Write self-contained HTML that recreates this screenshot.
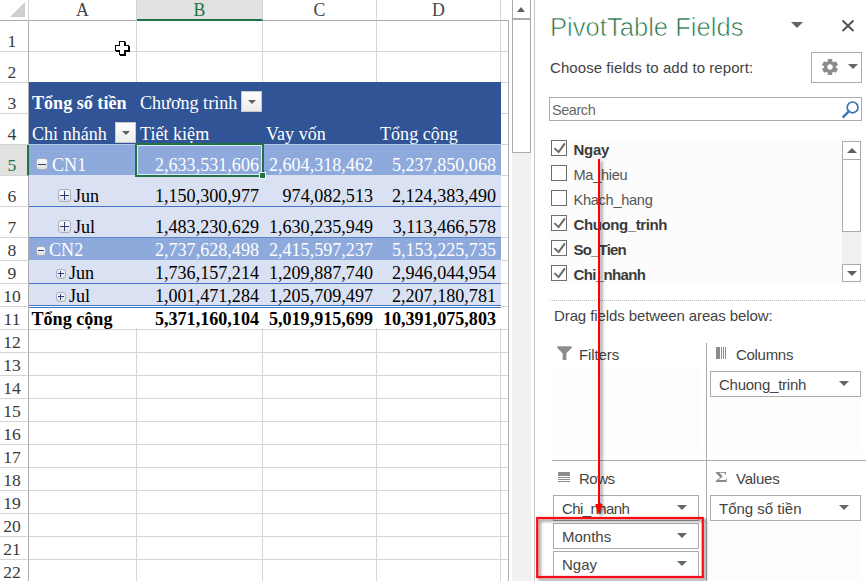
<!DOCTYPE html>
<html><head><meta charset="utf-8"><title>PivotTable</title>
<style>
html,body{margin:0;padding:0;}
body{width:866px;height:581px;overflow:hidden;position:relative;background:#fff;font-family:"Liberation Serif",serif;}
div,span{position:absolute;box-sizing:border-box;white-space:nowrap;}
#grid{left:0;top:0;width:509px;height:581px;overflow:hidden;background:#fff;}
.ch{top:0;height:21px;background:#fff;color:#444;font-size:17.8px;line-height:21px;text-align:center;border-right:1px solid #d4d4d4;border-bottom:1px solid #ababab;}
.rh{left:0;width:29px;background:#fff;color:#3a3a3a;font-size:17.6px;text-align:center;border-bottom:1px solid #d4d4d4;border-right:1px solid #ababab;}
.rh span{left:0;width:24px;bottom:-1px;line-height:21px;text-align:center;}
.hl{background:#e1e1e1 !important;}
.vl{top:20px;width:1px;height:561px;background:#d6d6d6;}
.gl{left:29px;width:479px;height:1px;background:#d6d6d6;}
.c{font-size:18.1px;line-height:21px;height:21px;}
.r{text-align:right;}
.w{color:#fff;}
.k{color:#000;}
.b{font-weight:bold;}
.sans{font-family:"Liberation Sans",sans-serif;}
</style></head><body>
<div id="grid">

<div class="gl" style="top:51px"></div>
<div class="gl" style="top:82px"></div>
<div class="gl" style="top:113px"></div>
<div class="gl" style="top:144px"></div>
<div class="gl" style="top:175px"></div>
<div class="gl" style="top:206px"></div>
<div class="gl" style="top:237px"></div>
<div class="gl" style="top:260px"></div>
<div class="gl" style="top:283px"></div>
<div class="gl" style="top:306px"></div>
<div class="gl" style="top:329px"></div>
<div class="gl" style="top:352px"></div>
<div class="gl" style="top:375px"></div>
<div class="gl" style="top:398px"></div>
<div class="gl" style="top:421px"></div>
<div class="gl" style="top:444px"></div>
<div class="gl" style="top:467px"></div>
<div class="gl" style="top:490px"></div>
<div class="gl" style="top:513px"></div>
<div class="gl" style="top:536px"></div>
<div class="gl" style="top:559px"></div>
<div class="gl" style="top:582px"></div>
<div class="gl" style="top:605px"></div>
<div class="vl" style="left:136px"></div>
<div class="vl" style="left:262px"></div>
<div class="vl" style="left:376px"></div>
<div class="vl" style="left:500px"></div>
<div style="left:29px;top:82px;width:472px;height:62px;background:#305496"></div>
<div style="left:29px;top:144px;width:472px;height:31px;background:#8ea9db"></div>
<div style="left:29px;top:144px;width:472px;height:1px;background:#b4c6e7"></div>
<div style="left:29px;top:175px;width:472px;height:62px;background:#d9e1f2"></div>
<div style="left:29px;top:206px;width:472px;height:1px;background:#4472c4"></div>
<div style="left:29px;top:237px;width:472px;height:23px;background:#8ea9db"></div>
<div style="left:29px;top:237px;width:472px;height:1px;background:#5b84cc"></div>
<div style="left:29px;top:260px;width:472px;height:46px;background:#d9e1f2"></div>
<div style="left:29px;top:283px;width:472px;height:1px;background:#4472c4"></div>
<div style="left:29px;top:305px;width:472px;height:3px;border-top:1px solid #4472c4;border-bottom:1px solid #4472c4;background:#fff"></div>
<div style="left:29px;top:308px;width:472px;height:20px;background:#fff"></div>
<div class="ch" style="left:0;width:29px;"></div>
<div style="left:10px;top:2px;width:0;height:0;border-left:15px solid transparent;border-bottom:15px solid #cfcfcf;"></div>
<div class="ch" style="left:29px;width:108px;">A</div>
<div class="ch hl" style="left:137px;width:126px;color:#217346;border-bottom:2px solid #217346;">B</div>
<div class="ch" style="left:263px;width:114px;">C</div>
<div class="ch" style="left:377px;width:124px;">D</div>
<div class="ch" style="left:501px;width:8px;border-right:none"></div>
<div style="left:508px;top:20px;width:1px;height:561px;background:#ababab"></div>
<div class="rh" style="top:21px;height:31px;"><span>1</span></div>
<div class="rh" style="top:52px;height:31px;"><span>2</span></div>
<div class="rh" style="top:83px;height:31px;"><span>3</span></div>
<div class="rh" style="top:114px;height:31px;"><span>4</span></div>
<div class="rh hl" style="top:145px;height:31px;color:#217346;border-right:2px solid #217346;"><span>5</span></div>
<div class="rh" style="top:176px;height:31px;"><span>6</span></div>
<div class="rh" style="top:207px;height:31px;"><span>7</span></div>
<div class="rh" style="top:238px;height:23px;"><span>8</span></div>
<div class="rh" style="top:261px;height:23px;"><span>9</span></div>
<div class="rh" style="top:284px;height:23px;"><span>10</span></div>
<div class="rh" style="top:307px;height:23px;"><span>11</span></div>
<div class="rh" style="top:330px;height:23px;"><span>12</span></div>
<div class="rh" style="top:353px;height:23px;"><span>13</span></div>
<div class="rh" style="top:376px;height:23px;"><span>14</span></div>
<div class="rh" style="top:399px;height:23px;"><span>15</span></div>
<div class="rh" style="top:422px;height:23px;"><span>16</span></div>
<div class="rh" style="top:445px;height:23px;"><span>17</span></div>
<div class="rh" style="top:468px;height:23px;"><span>18</span></div>
<div class="rh" style="top:491px;height:23px;"><span>19</span></div>
<div class="rh" style="top:514px;height:23px;"><span>20</span></div>
<div class="rh" style="top:537px;height:23px;"><span>21</span></div>
<div class="rh" style="top:560px;height:23px;"><span>22</span></div>
<div class="rh" style="top:583px;height:23px;"><span>23</span></div>
<div class="c w b" style="left:32px;top:93px;">Tổng số tiền</div>
<div class="c w" style="left:140px;top:93px;">Chương trình</div>
<div class="c w" style="left:32px;top:124px;">Chi nhánh</div>
<div class="c w" style="left:140px;top:124px;">Tiết kiệm</div>
<div class="c w" style="left:266px;top:124px;">Vay vốn</div>
<div class="c w" style="left:380px;top:124px;">Tổng cộng</div>
<div style="left:241px;top:91px;width:21px;height:21px;background:linear-gradient(#fff,#ececec);border:1px solid #c8c8c8;"><div style="left:6px;top:8px;width:0;height:0;border-left:4px solid transparent;border-right:4px solid transparent;border-top:4px solid #606060;"></div></div>
<div style="left:115px;top:122px;width:21px;height:21px;background:linear-gradient(#fff,#ececec);border:1px solid #c8c8c8;"><div style="left:6px;top:8px;width:0;height:0;border-left:4px solid transparent;border-right:4px solid transparent;border-top:4px solid #606060;"></div></div>
<div class="c w" style="left:52px;top:155px;">CN1</div>
<div style="left:36.3px;top:158.3px;width:12px;height:12px;background:linear-gradient(#f4f4f4 30%,#dedede);border:1px solid #a9afbf;border-radius:3px;"><div style="left:1px;right:1px;top:4.40px;height:1.2px;background:#2f3a78"></div></div>
<div class="c r w" style="left:136px;width:123px;top:155px;">2,633,531,606</div>
<div class="c r w" style="left:262px;width:111px;top:155px;">2,604,318,462</div>
<div class="c r w" style="left:376px;width:120px;top:155px;">5,237,850,068</div>
<div class="c k" style="left:74px;top:186px;">Jun</div>
<div style="left:58px;top:189px;width:13px;height:13px;background:linear-gradient(#f4f4f4 30%,#dedede);border:1px solid #a9afbf;border-radius:3px;"><div style="left:1px;right:1px;top:4.90px;height:1.2px;background:#2f3a78"></div><div style="top:1px;bottom:1px;left:4.90px;width:1.2px;background:#2f3a78"></div></div>
<div class="c r k" style="left:136px;width:123px;top:186px;">1,150,300,977</div>
<div class="c r k" style="left:262px;width:111px;top:186px;">974,082,513</div>
<div class="c r k" style="left:376px;width:120px;top:186px;">2,124,383,490</div>
<div class="c k" style="left:74px;top:217px;">Jul</div>
<div style="left:58px;top:220px;width:13px;height:13px;background:linear-gradient(#f4f4f4 30%,#dedede);border:1px solid #a9afbf;border-radius:3px;"><div style="left:1px;right:1px;top:4.90px;height:1.2px;background:#2f3a78"></div><div style="top:1px;bottom:1px;left:4.90px;width:1.2px;background:#2f3a78"></div></div>
<div class="c r k" style="left:136px;width:123px;top:217px;">1,483,230,629</div>
<div class="c r k" style="left:262px;width:111px;top:217px;">1,630,235,949</div>
<div class="c r k" style="left:376px;width:120px;top:217px;">3,113,466,578</div>
<div class="c w" style="left:49px;top:240px;">CN2</div>
<div style="left:35.5px;top:245.5px;width:10px;height:10px;background:linear-gradient(#f4f4f4 30%,#dedede);border:1px solid #a9afbf;border-radius:3px;"><div style="left:1px;right:1px;top:3.40px;height:1.2px;background:#2f3a78"></div></div>
<div class="c r w" style="left:136px;width:123px;top:240px;">2,737,628,498</div>
<div class="c r w" style="left:262px;width:111px;top:240px;">2,415,597,237</div>
<div class="c r w" style="left:376px;width:120px;top:240px;">5,153,225,735</div>
<div class="c k" style="left:69px;top:263px;">Jun</div>
<div style="left:55.5px;top:268.5px;width:10px;height:10px;background:linear-gradient(#f4f4f4 30%,#dedede);border:1px solid #a9afbf;border-radius:3px;"><div style="left:1px;right:1px;top:3.40px;height:1.2px;background:#2f3a78"></div><div style="top:1px;bottom:1px;left:3.40px;width:1.2px;background:#2f3a78"></div></div>
<div class="c r k" style="left:136px;width:123px;top:263px;">1,736,157,214</div>
<div class="c r k" style="left:262px;width:111px;top:263px;">1,209,887,740</div>
<div class="c r k" style="left:376px;width:120px;top:263px;">2,946,044,954</div>
<div class="c k" style="left:69px;top:286px;">Jul</div>
<div style="left:55.5px;top:291.5px;width:10px;height:10px;background:linear-gradient(#f4f4f4 30%,#dedede);border:1px solid #a9afbf;border-radius:3px;"><div style="left:1px;right:1px;top:3.40px;height:1.2px;background:#2f3a78"></div><div style="top:1px;bottom:1px;left:3.40px;width:1.2px;background:#2f3a78"></div></div>
<div class="c r k" style="left:136px;width:123px;top:286px;">1,001,471,284</div>
<div class="c r k" style="left:262px;width:111px;top:286px;">1,205,709,497</div>
<div class="c r k" style="left:376px;width:120px;top:286px;">2,207,180,781</div>
<div class="c k b" style="left:31.5px;top:309px;">Tổng cộng</div>
<div class="c r k b" style="left:136px;width:123px;top:309px;">5,371,160,104</div>
<div class="c r k b" style="left:262px;width:111px;top:309px;">5,019,915,699</div>
<div class="c r k b" style="left:376px;width:120px;top:309px;">10,391,075,803</div>
<div style="left:135px;top:143px;width:129px;height:34px;border:2px solid #217346;box-shadow:inset 0 0 0 1px rgba(255,255,255,.75);"></div>
<div style="left:259px;top:172px;width:7px;height:7px;background:#217346;border:1px solid #fff;"></div>
<svg style="position:absolute;left:115px;top:41px" width="16" height="16" viewBox="0 0 16 16" shape-rendering="crispEdges"><path d="M5 1h6v4h4v6h-4v4h-6v-4h-4v-6h4z" fill="#000"/><path d="M4 0h6v4h4v6h-4v4h-6v-4h-4v-6h4z" fill="#000"/><path d="M5 1h4v4h4v4h-4v4h-4v-4h-4v-4h4z" fill="#fff"/></svg>
</div><div id="sb" style="left:509px;top:0;width:25px;height:581px;background:#fff;">
<div style="left:3px;top:-1px;width:19px;height:20px;border:1px solid #ababab;background:#fff;"></div>
<div style="left:8px;top:7px;width:0;height:0;border-left:4.5px solid transparent;border-right:4.5px solid transparent;border-bottom:5px solid #606060;"></div>
<div style="left:3px;top:153px;width:19px;height:430px;background:#f1f1f1;"></div>
<div style="left:3px;top:19px;width:19px;height:134px;border:1px solid #ababab;background:#fff;"></div>
</div>
<div id="panel" class="sans" style="left:534px;top:0;width:332px;height:581px;background:#fff;border-left:1px solid #c6c6c6;color:#444;font-size:14px;">
<div style="left:15px;top:9px;font-size:25.6px;line-height:36px;color:#1e7145;font-weight:normal;-webkit-text-stroke:0.7px #fff;">PivotTable Fields</div>
<div style="left:256px;top:22px;width:0;height:0;border-left:6px solid transparent;border-right:6px solid transparent;border-top:6px solid #666;"></div>
<svg style="position:absolute;left:306px;top:19px" width="14" height="14" viewBox="0 0 14 14"><path d="M1.5 1.5L12.5 12M12.5 1.5L1.5 12" stroke="#505050" stroke-width="1.9" fill="none"/></svg>
<div style="left:15px;top:58px;font-size:15px;letter-spacing:0.07px;line-height:20px;">Choose fields to add to report:</div>
<div style="left:276px;top:52px;width:51px;height:31px;border:1px solid #ababab;background:#fff;"></div>
<svg style="position:absolute;left:287px;top:59px" width="16" height="16" viewBox="0 0 16 16"><g fill="#8c8c8c"><circle cx="8" cy="8" r="5.9"/><rect x="5.7" y="0" width="4.6" height="16" rx="0.8"/><rect x="5.7" y="0" width="4.6" height="16" rx="0.8" transform="rotate(60 8 8)"/><rect x="5.7" y="0" width="4.6" height="16" rx="0.8" transform="rotate(120 8 8)"/></g><circle cx="8" cy="8" r="2.7" fill="#fff"/></svg>
<div style="left:313px;top:64px;width:0;height:0;border-left:5px solid transparent;border-right:5px solid transparent;border-top:5.5px solid #666;"></div>
<div style="left:14px;top:97px;width:313px;height:24px;border:1px solid #ababab;background:#fff;"></div>
<div style="left:17px;top:99.5px;font-size:14.5px;letter-spacing:-0.45px;line-height:20px;color:#6a6a6a;">Search</div>
<svg style="position:absolute;left:305px;top:99px" width="22" height="20" viewBox="0 0 22 20"><circle cx="12.6" cy="8.4" r="5.4" fill="none" stroke="#3674b5" stroke-width="1.7"/><path d="M8.8 12.4L2.6 18.6" stroke="#3674b5" stroke-width="2.3"/></svg>
<div style="left:14px;top:138px;width:314px;height:146px;background:#fcfcfc;"></div>

<div style="left:16px;top:140px;width:16px;height:16px;border:1px solid #6e6e6e;background:#fff;"></div>
<svg style="position:absolute;left:17px;top:141px" width="14" height="14" viewBox="0 0 14 14"><path d="M2.4 7.1L6.6 11.1L12.9 2.3" stroke="#686868" stroke-width="2" fill="none"/></svg>
<div style="left:38.5px;top:140px;line-height:20px;font-size:15px;font-weight:bold;color:#3b3b3b;letter-spacing:-0.25px;">Ngay</div>
<div style="left:16px;top:165px;width:16px;height:16px;border:1px solid #6e6e6e;background:#fff;"></div>
<div style="left:38.5px;top:165px;line-height:20px;font-size:14.6px;font-weight:normal;color:#555;letter-spacing:-0.3px;">Ma_hieu</div>
<div style="left:16px;top:190px;width:16px;height:16px;border:1px solid #6e6e6e;background:#fff;"></div>
<div style="left:38.5px;top:190px;line-height:20px;font-size:14.6px;font-weight:normal;color:#555;letter-spacing:-0.3px;">Khach_hang</div>
<div style="left:16px;top:215px;width:16px;height:16px;border:1px solid #6e6e6e;background:#fff;"></div>
<svg style="position:absolute;left:17px;top:216px" width="14" height="14" viewBox="0 0 14 14"><path d="M2.4 7.1L6.6 11.1L12.9 2.3" stroke="#686868" stroke-width="2" fill="none"/></svg>
<div style="left:38.5px;top:215px;line-height:20px;font-size:15px;font-weight:bold;color:#3b3b3b;letter-spacing:-0.4px;">Chuong_trinh</div>
<div style="left:16px;top:240px;width:16px;height:16px;border:1px solid #6e6e6e;background:#fff;"></div>
<svg style="position:absolute;left:17px;top:241px" width="14" height="14" viewBox="0 0 14 14"><path d="M2.4 7.1L6.6 11.1L12.9 2.3" stroke="#686868" stroke-width="2" fill="none"/></svg>
<div style="left:38.5px;top:240px;line-height:20px;font-size:15px;font-weight:bold;color:#3b3b3b;letter-spacing:-0.8px;">So_Tien</div>
<div style="left:16px;top:265px;width:16px;height:16px;border:1px solid #6e6e6e;background:#fff;"></div>
<svg style="position:absolute;left:17px;top:266px" width="14" height="14" viewBox="0 0 14 14"><path d="M2.4 7.1L6.6 11.1L12.9 2.3" stroke="#686868" stroke-width="2" fill="none"/></svg>
<div style="left:38.5px;top:265px;line-height:20px;font-size:15px;font-weight:bold;color:#3b3b3b;letter-spacing:-0.64px;">Chi_nhanh</div>
<div style="left:307px;top:141px;width:19px;height:141px;background:#f0f0f0;"></div>
<div style="left:307px;top:141px;width:19px;height:19px;border:1px solid #ababab;background:#fff;"></div>
<div style="left:311.5px;top:148px;width:0;height:0;border-left:5px solid transparent;border-right:5px solid transparent;border-bottom:5.5px solid #606060;"></div>
<div style="left:307px;top:159px;width:19px;height:73px;border:1px solid #ababab;background:#fff;"></div>
<div style="left:307px;top:264px;width:19px;height:18px;border:1px solid #ababab;background:#fff;"></div>
<div style="left:311.5px;top:271px;width:0;height:0;border-left:5px solid transparent;border-right:5px solid transparent;border-top:5.5px solid #606060;"></div>
<div style="left:15px;top:300px;width:317px;height:0;border-top:1px dotted #bdbdbd;"></div>
<div style="left:19px;top:306px;font-size:15px;letter-spacing:-0.1px;line-height:20px;">Drag fields between areas below:</div>
<div style="left:171px;top:343px;width:1px;height:238px;background:#ababab;"></div>
<div style="left:17px;top:460px;width:315px;height:1px;background:#ababab;"></div>
<div style="left:17px;top:369px;width:148px;height:85px;background:#fdfdfd;"></div>
<div style="left:175px;top:369px;width:151px;height:85px;background:#fdfdfd;"></div>
<div style="left:175px;top:494px;width:151px;height:87px;background:#fdfdfd;"></div>
<svg style="position:absolute;left:22px;top:346px" width="15" height="14" viewBox="0 0 15 14"><path d="M0.3 0.3h14.4v1.7l-5.3 5.2v6.8h-3.8v-6.8l-5.3-5.2z" fill="#8c8c8c"/></svg>
<div style="left:44px;top:345px;font-size:15px;letter-spacing:-0.1px;line-height:20px;">Filters</div>
<div style="left:181px;top:347px;width:4px;height:12px;background:#8c8c8c"></div>
<div style="left:186px;top:347px;width:1px;height:12px;background:#8c8c8c"></div>
<div style="left:188px;top:347px;width:1px;height:12px;background:#8c8c8c"></div>
<div style="left:190px;top:347px;width:1px;height:12px;background:#8c8c8c"></div>
<div style="left:201px;top:345px;font-size:15px;letter-spacing:-0.3px;line-height:20px;">Columns</div>
<div style="left:23px;top:472px;width:12px;height:4px;background:#8c8c8c"></div>
<div style="left:23px;top:477px;width:12px;height:1px;background:#8c8c8c"></div>
<div style="left:23px;top:479px;width:12px;height:1px;background:#8c8c8c"></div>
<div style="left:23px;top:481px;width:12px;height:1px;background:#8c8c8c"></div>
<div style="left:44px;top:469px;font-size:15px;letter-spacing:-0.5px;line-height:20px;">Rows</div>
<div style="left:180px;top:465.5px;font-size:15.5px;line-height:22px;font-weight:bold;font-family:'Liberation Serif',serif;color:#8a8a8a;transform:scaleX(1.25);transform-origin:0 0;">Σ</div>
<div style="left:201px;top:469px;font-size:15px;letter-spacing:-0.2px;line-height:20px;">Values</div>

<div style="left:175px;top:371px;width:151px;height:26px;border:1px solid #ababab;background:#fff;"><div style="left:8px;top:2.5px;font-size:15px;letter-spacing:-0.25px;line-height:20px;">Chuong_trinh</div><div style="right:11px;top:9px;width:0;height:0;border-left:5px solid transparent;border-right:5px solid transparent;border-top:5.5px solid #666;"></div></div>
<div style="left:175px;top:495px;width:151px;height:26px;border:1px solid #ababab;background:#fff;"><div style="left:8px;top:2.5px;font-size:15px;letter-spacing:0px;line-height:20px;">Tổng số tiền</div><div style="right:11px;top:9px;width:0;height:0;border-left:5px solid transparent;border-right:5px solid transparent;border-top:5.5px solid #666;"></div></div>
<div style="left:18px;top:495px;width:146px;height:26px;border:1px solid #ababab;background:#fff;"><div style="left:8px;top:2.5px;font-size:15px;letter-spacing:-0.58px;line-height:20px;">Chi_nhanh</div><div style="right:11px;top:9px;width:0;height:0;border-left:5px solid transparent;border-right:5px solid transparent;border-top:5.5px solid #666;"></div></div>
<div style="left:18px;top:523px;width:146px;height:26px;border:1px solid #ababab;background:#fff;"><div style="left:8px;top:2.5px;font-size:15px;letter-spacing:0px;line-height:20px;">Months</div><div style="right:11px;top:9px;width:0;height:0;border-left:5px solid transparent;border-right:5px solid transparent;border-top:5.5px solid #666;"></div></div>
<div style="left:18px;top:551px;width:146px;height:26px;border:1px solid #ababab;background:#fff;"><div style="left:8px;top:2.5px;font-size:15px;letter-spacing:0px;line-height:20px;">Ngay</div><div style="right:11px;top:9px;width:0;height:0;border-left:5px solid transparent;border-right:5px solid transparent;border-top:5.5px solid #666;"></div></div>
</div>
<svg style="position:absolute;left:0;top:0;" width="866" height="581" viewBox="0 0 866 581">
<defs><filter id="sh" x="-20%" y="-20%" width="150%" height="150%"><feDropShadow dx="2.2" dy="2.2" stdDeviation="1.4" flood-color="#000" flood-opacity="0.5"/></filter></defs>
<g filter="url(#sh)">
<rect x="598" y="159" width="2" height="346" fill="#f00"/>
<path d="M595.2 504L602.6 504L598.9 514.8Z" fill="#f00"/>
<rect x="537.2" y="518" width="165.6" height="59" fill="none" stroke="#f80d12" stroke-width="2.2"/>
</g></svg>
</body></html>
